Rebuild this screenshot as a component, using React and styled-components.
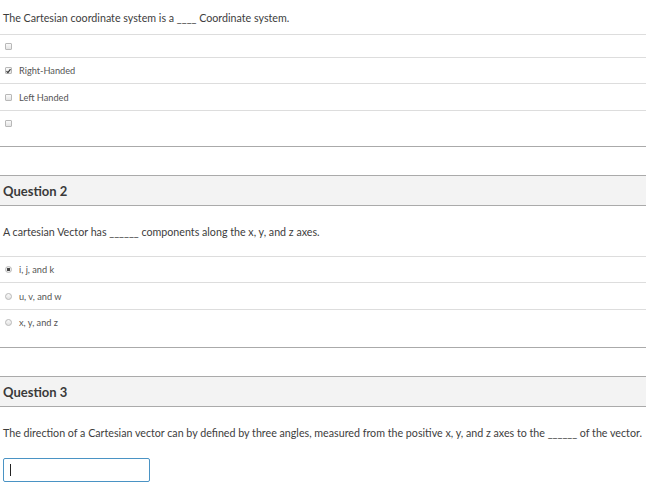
import styled, { createGlobalStyle } from "styled-components";

const GlobalStyle = createGlobalStyle`
	html, body {
		margin: 0;
		padding: 0;
		background: #fff;
	}
	body {
		font-family: Lato, "Open Sans", sans-serif;
		color: #333;
	}
`;

const Page = styled.div`
	width: 646px;
	display: flex;
	flex-direction: column;
`;

const QuestionHeader = styled.div`
	height: 29px;
	display: flex;
	align-items: center;
	padding-left: 3px;
	background: #f3f3f3;
	border-top: 1px solid #aaa;
	border-bottom: 1px solid #aaa;
	font-size: 13px;
	font-weight: 700;
	color: #3a3a3a;
	margin-top: ${ props => props.$gap }px;
`;

const Prompt = styled.div`
	height: ${ props => props.$h }px;
	display: flex;
	align-items: center;
	padding-left: 3px;
	font-size: 10.7px;
	color: #3d3d3d;
	white-space: nowrap;
`;

const Answers = styled.div`
	display: flex;
	flex-direction: column;
	border-bottom: 1px solid #aaa;
	padding-bottom: ${ props => props.$pad }px;
`;

const Answer = styled.div`
	height: ${ props => props.$h || 26 }px;
	display: flex;
	align-items: center;
	gap: 7px;
	padding-left: 5px;
	border-top: 1px solid #ddd;
	font-size: 9.2px;
	color: #555;
`;

const Box = styled.span`
	width: 7px;
	height: 7px;
	box-sizing: border-box;
	border: 1px solid #b8b8b8;
	border-radius: 1px;
	background: linear-gradient(#fafafa, #e4e4e4);
	display: inline-flex;
	align-items: center;
	justify-content: center;
	flex: none;
`;

const Radio = styled.span`
	width: 7px;
	height: 7px;
	box-sizing: border-box;
	border: 1px solid #b8b8b8;
	border-radius: 50%;
	background: ${ props => props.$on
		? "radial-gradient(circle, #444 0 1.4px, #eee 1.8px)"
		: "linear-gradient(#fafafa, #e2e2e2)" };
	flex: none;
`;

const AnswerBox = styled.div`
	margin-left: 3px;
	width: 147px;
	height: 24px;
	box-sizing: border-box;
	border: 1px solid #4a93c4;
	border-radius: 2px;
	display: flex;
	align-items: center;
	padding-left: 6px;
`;

const Caret = styled.span`
	width: 1px;
	height: 12px;
	background: #222;
`;

const Check = () => (
	<svg width="6" height="6" viewBox="0 0 6 6">
		<path d="M0.6 3.2 L2.3 4.9 L5.4 0.8" stroke="#333" strokeWidth="1.4" fill="none" />
	</svg>
);

const CheckRow = ({ label, checked, h }) => (
	<Answer $h={ h }>
		<Box>{ checked && <Check /> }</Box>
		{ label && <span>{ label }</span> }
	</Answer>
);

const RadioRow = ({ label, checked, h }) => (
	<Answer $h={ h }>
		<Radio $on={ checked } />
		<span>{ label }</span>
	</Answer>
);

const App = () => (
	<>
		<GlobalStyle />
		<Page>
			<Prompt $h={ 34 }>The Cartesian coordinate system is a ____ Coordinate system.</Prompt>
			<Answers $pad={ 10 }>
				<CheckRow h={ 22 } />
				<CheckRow label="Right-Handed" checked h={ 25 } />
				<CheckRow label="Left Handed" h={ 26 } />
				<CheckRow h={ 25 } />
			</Answers>

			<QuestionHeader $gap={ 28 }>Question 2</QuestionHeader>
			<Prompt $h={ 50 }>A cartesian Vector has ______ components along the x, y, and z axes.</Prompt>
			<Answers $pad={ 12 }>
				<RadioRow label="i, j, and k" checked h={ 25 } />
				<RadioRow label="u, v, and w" />
				<RadioRow label="x, y, and z" h={ 25 } />
			</Answers>

			<QuestionHeader $gap={ 28 }>Question 3</QuestionHeader>
			<Prompt $h={ 51 }>The direction of a Cartesian vector can by defined by three angles, measured from the positive x, y, and z axes to the ______ of the vector.</Prompt>
			<AnswerBox><Caret /></AnswerBox>
		</Page>
	</>
);

export default App;
